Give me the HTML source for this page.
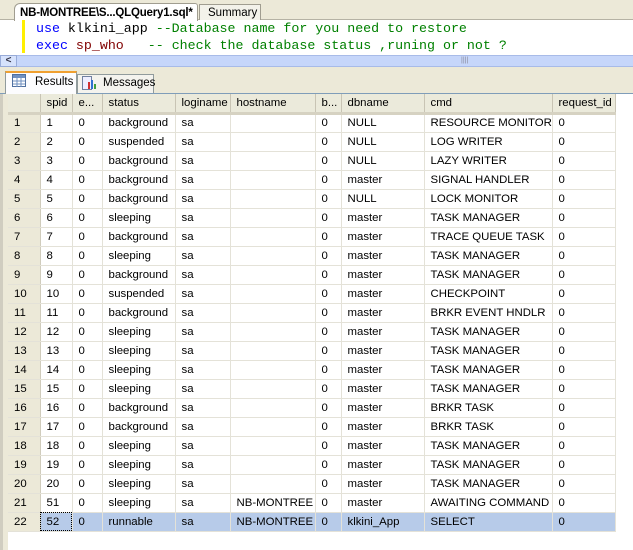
<!DOCTYPE html>
<html><head><style>
*{margin:0;padding:0;box-sizing:border-box}
body{width:633px;height:550px;overflow:hidden;background:#fff;font-family:"Liberation Sans",sans-serif;font-size:12px;position:relative}
.abs{position:absolute;white-space:nowrap}
.mono{font-family:"Liberation Mono",monospace;font-size:13.3px;white-space:pre}
table{border-collapse:collapse;position:absolute;left:8px;top:94px;table-layout:fixed;width:607px}
td,th{height:19px;padding:0 0 0 6px;border-right:1px solid #e4e2d8;border-bottom:1px solid #e4e2d8;font-weight:normal;text-align:left;white-space:nowrap;overflow:hidden;color:#000;font-size:11.4px}
th{background:#ebeadb;border-bottom:3px solid #d6d2c2;height:19px;border-right:1px solid #c8c4b4}
td.n{background:#ece9d8;border-right:1px solid #d0ccbc}
tr.sel td{background:#b7cbe9}
</style></head><body>
<div class="abs" style="left:0;top:0;width:633px;height:20px;background:#ece9d8;border-bottom:1px solid #b5b2a4"></div>
<div class="abs" style="left:14px;top:3px;width:184px;height:18px;background:#fff;border:1px solid #a09d90;border-bottom:none;border-radius:6px 3px 0 0;font-weight:bold;padding:3px 0 0 5px;font-size:11.5px;letter-spacing:-0.2px;overflow:hidden">NB-MONTREE\S...QLQuery1.sql*</div>
<div class="abs" style="left:199px;top:4px;width:62px;height:16px;background:#f3f2ea;border:1px solid #a09d90;border-bottom:none;padding:2px 0 0 8px;font-size:11.5px">Summary</div>
<div class="abs" style="left:22px;top:20px;width:3px;height:33px;background:#ffef00"></div>
<div class="abs mono" style="left:36px;top:20px;line-height:17px"><span style="color:#00f">use</span> klkini_app <span style="color:#008000">--Database name for you need to restore</span>
<span style="color:#00f">exec</span> <span style="color:#800000">sp_who</span>   <span style="color:#008000">-- check the database status ,runing or not ?</span></div>
<div class="abs" style="left:0;top:55px;width:633px;height:12px;background:#c6d6fa;border-top:1px solid #a8bbe8;border-bottom:1px solid #a8bbe8"></div>
<div class="abs" style="left:0;top:55px;width:17px;height:12px;background:#d6e2fc;border:1px solid #98abd8;font-size:10px;line-height:10px;text-align:center;font-weight:bold;color:#334">&lt;</div>
<div class="abs" style="left:461px;top:57px;font-size:7px;color:#889">||||</div>
<div class="abs" style="left:0;top:67px;width:633px;height:27px;background:#ece9d8;border-bottom:1px solid #7f9db9"></div>
<div class="abs" style="left:5px;top:71px;width:72px;height:23px;background:#fcfcfe;border:1px solid #919b9c;border-top:2px solid #f0a030;border-bottom:none;padding:3px 0 0 29px;font-size:11.5px">Results</div>
<svg class="abs" style="left:12px;top:74px" width="15" height="14"><rect x="0.5" y="0.5" width="13" height="12" fill="#fff" stroke="#5070a0"/><rect x="1" y="1" width="12" height="3" fill="#7090c0"/><path d="M1 7h12M1 10h12M5 4v9M9 4v9" stroke="#7090c0"/></svg>
<div class="abs" style="left:77px;top:74px;width:77px;height:19px;background:#f4f3ee;border:1px solid #919b9c;border-bottom:none;padding:2px 0 0 25px;font-size:11.5px">Messages</div>
<svg class="abs" style="left:82px;top:76px" width="14" height="15"><rect x="0.5" y="0.5" width="9" height="13" fill="#eef" stroke="#7080a0"/><rect x="6" y="6" width="2" height="7" fill="#d03030"/><rect x="9" y="4" width="2" height="9" fill="#3070d0"/><rect x="12" y="8" width="2" height="5" fill="#40a040"/></svg>
<div class="abs" style="left:0;top:94px;width:8px;height:456px;background:#ece9d8;border-left:3px solid #d0cdc0"></div>
<table>
<colgroup><col style="width:32px"><col style="width:32px"><col style="width:30px"><col style="width:73px"><col style="width:55px"><col style="width:85px"><col style="width:26px"><col style="width:83px"><col style="width:128px"><col style="width:63px"></colgroup>
<tr><th></th><th>spid</th><th>e...</th><th>status</th><th>loginame</th><th>hostname</th><th>b...</th><th>dbname</th><th>cmd</th><th>request_id</th></tr>
<tr><td class="n">1</td><td>1</td><td>0</td><td>background</td><td>sa</td><td></td><td>0</td><td>NULL</td><td>RESOURCE MONITOR</td><td>0</td></tr>
<tr><td class="n">2</td><td>2</td><td>0</td><td>suspended</td><td>sa</td><td></td><td>0</td><td>NULL</td><td>LOG WRITER</td><td>0</td></tr>
<tr><td class="n">3</td><td>3</td><td>0</td><td>background</td><td>sa</td><td></td><td>0</td><td>NULL</td><td>LAZY WRITER</td><td>0</td></tr>
<tr><td class="n">4</td><td>4</td><td>0</td><td>background</td><td>sa</td><td></td><td>0</td><td>master</td><td>SIGNAL HANDLER</td><td>0</td></tr>
<tr><td class="n">5</td><td>5</td><td>0</td><td>background</td><td>sa</td><td></td><td>0</td><td>NULL</td><td>LOCK MONITOR</td><td>0</td></tr>
<tr><td class="n">6</td><td>6</td><td>0</td><td>sleeping</td><td>sa</td><td></td><td>0</td><td>master</td><td>TASK MANAGER</td><td>0</td></tr>
<tr><td class="n">7</td><td>7</td><td>0</td><td>background</td><td>sa</td><td></td><td>0</td><td>master</td><td>TRACE QUEUE TASK</td><td>0</td></tr>
<tr><td class="n">8</td><td>8</td><td>0</td><td>sleeping</td><td>sa</td><td></td><td>0</td><td>master</td><td>TASK MANAGER</td><td>0</td></tr>
<tr><td class="n">9</td><td>9</td><td>0</td><td>background</td><td>sa</td><td></td><td>0</td><td>master</td><td>TASK MANAGER</td><td>0</td></tr>
<tr><td class="n">10</td><td>10</td><td>0</td><td>suspended</td><td>sa</td><td></td><td>0</td><td>master</td><td>CHECKPOINT</td><td>0</td></tr>
<tr><td class="n">11</td><td>11</td><td>0</td><td>background</td><td>sa</td><td></td><td>0</td><td>master</td><td>BRKR EVENT HNDLR</td><td>0</td></tr>
<tr><td class="n">12</td><td>12</td><td>0</td><td>sleeping</td><td>sa</td><td></td><td>0</td><td>master</td><td>TASK MANAGER</td><td>0</td></tr>
<tr><td class="n">13</td><td>13</td><td>0</td><td>sleeping</td><td>sa</td><td></td><td>0</td><td>master</td><td>TASK MANAGER</td><td>0</td></tr>
<tr><td class="n">14</td><td>14</td><td>0</td><td>sleeping</td><td>sa</td><td></td><td>0</td><td>master</td><td>TASK MANAGER</td><td>0</td></tr>
<tr><td class="n">15</td><td>15</td><td>0</td><td>sleeping</td><td>sa</td><td></td><td>0</td><td>master</td><td>TASK MANAGER</td><td>0</td></tr>
<tr><td class="n">16</td><td>16</td><td>0</td><td>background</td><td>sa</td><td></td><td>0</td><td>master</td><td>BRKR TASK</td><td>0</td></tr>
<tr><td class="n">17</td><td>17</td><td>0</td><td>background</td><td>sa</td><td></td><td>0</td><td>master</td><td>BRKR TASK</td><td>0</td></tr>
<tr><td class="n">18</td><td>18</td><td>0</td><td>sleeping</td><td>sa</td><td></td><td>0</td><td>master</td><td>TASK MANAGER</td><td>0</td></tr>
<tr><td class="n">19</td><td>19</td><td>0</td><td>sleeping</td><td>sa</td><td></td><td>0</td><td>master</td><td>TASK MANAGER</td><td>0</td></tr>
<tr><td class="n">20</td><td>20</td><td>0</td><td>sleeping</td><td>sa</td><td></td><td>0</td><td>master</td><td>TASK MANAGER</td><td>0</td></tr>
<tr><td class="n">21</td><td>51</td><td>0</td><td>sleeping</td><td>sa</td><td>NB-MONTREE</td><td>0</td><td>master</td><td>AWAITING COMMAND</td><td>0</td></tr>
<tr class="sel"><td class="n" style="background:#ece9d8">22</td><td style="outline:1px dotted #000;outline-offset:-1px">52</td><td>0</td><td>runnable</td><td>sa</td><td>NB-MONTREE</td><td>0</td><td>klkini_App</td><td>SELECT</td><td>0</td></tr>
</table>
</body></html>
